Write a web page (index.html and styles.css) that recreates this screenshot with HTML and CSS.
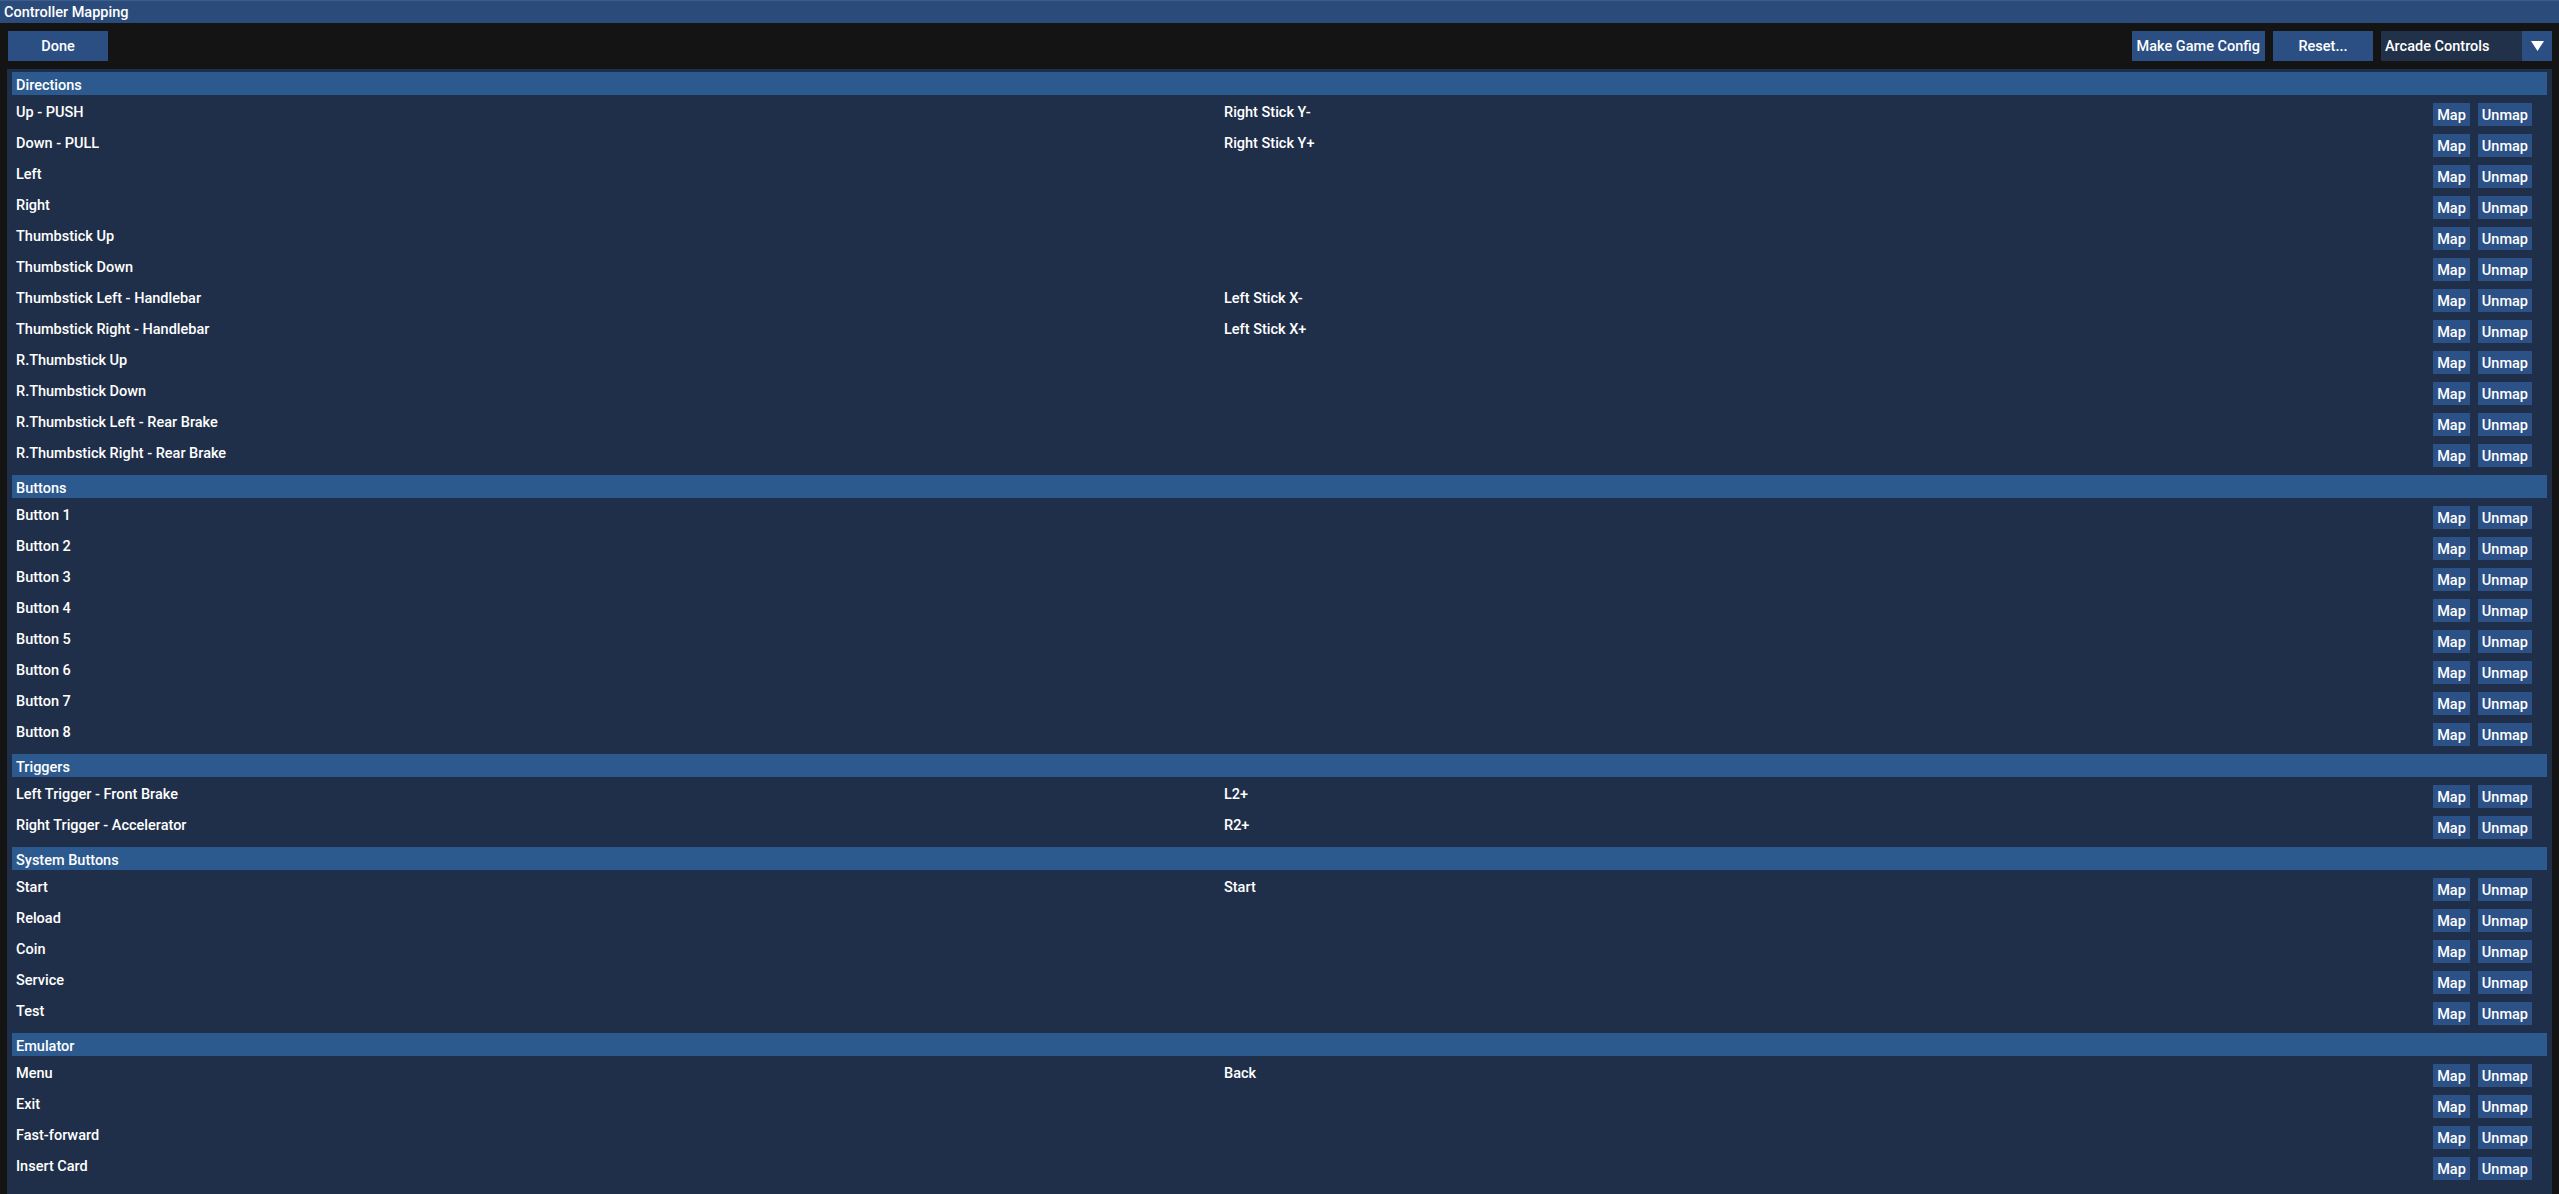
FILE: index.html
```html
<!DOCTYPE html>
<html>
<head>
<meta charset="utf-8">
<link rel="stylesheet" href="styles.css">
</head>
<body>
<div class="window">
  <div class="titlebar">Controller Mapping</div>
  <div class="toolbar">
    <button class="btn btn-fixed">Done</button>
    <div class="spacer"></div>
    <button class="btn btn-auto">Make Game Config</button>
    <button class="btn btn-fixed">Reset...</button>
    <div class="combo">
      <span class="combo-label">Arcade Controls</span>
      <span class="combo-arrow"><svg width="13" height="10" viewBox="0 0 13 10"><polygon points="0,0 13,0 6.5,10" fill="#ffffff"/></svg></span>
    </div>
  </div>
  <div class="panel">
    <div class="section">Directions</div>
    <div class="row"><span class="label">Up - PUSH</span><span class="bind">Right Stick Y-</span><span class="actions"><button class="sbtn">Map</button><button class="sbtn">Unmap</button></span></div>
    <div class="row"><span class="label">Down - PULL</span><span class="bind">Right Stick Y+</span><span class="actions"><button class="sbtn">Map</button><button class="sbtn">Unmap</button></span></div>
    <div class="row"><span class="label">Left</span><span class="bind"></span><span class="actions"><button class="sbtn">Map</button><button class="sbtn">Unmap</button></span></div>
    <div class="row"><span class="label">Right</span><span class="bind"></span><span class="actions"><button class="sbtn">Map</button><button class="sbtn">Unmap</button></span></div>
    <div class="row"><span class="label">Thumbstick Up</span><span class="bind"></span><span class="actions"><button class="sbtn">Map</button><button class="sbtn">Unmap</button></span></div>
    <div class="row"><span class="label">Thumbstick Down</span><span class="bind"></span><span class="actions"><button class="sbtn">Map</button><button class="sbtn">Unmap</button></span></div>
    <div class="row"><span class="label">Thumbstick Left - Handlebar</span><span class="bind">Left Stick X-</span><span class="actions"><button class="sbtn">Map</button><button class="sbtn">Unmap</button></span></div>
    <div class="row"><span class="label">Thumbstick Right - Handlebar</span><span class="bind">Left Stick X+</span><span class="actions"><button class="sbtn">Map</button><button class="sbtn">Unmap</button></span></div>
    <div class="row"><span class="label">R.Thumbstick Up</span><span class="bind"></span><span class="actions"><button class="sbtn">Map</button><button class="sbtn">Unmap</button></span></div>
    <div class="row"><span class="label">R.Thumbstick Down</span><span class="bind"></span><span class="actions"><button class="sbtn">Map</button><button class="sbtn">Unmap</button></span></div>
    <div class="row"><span class="label">R.Thumbstick Left - Rear Brake</span><span class="bind"></span><span class="actions"><button class="sbtn">Map</button><button class="sbtn">Unmap</button></span></div>
    <div class="row"><span class="label">R.Thumbstick Right - Rear Brake</span><span class="bind"></span><span class="actions"><button class="sbtn">Map</button><button class="sbtn">Unmap</button></span></div>

    <div class="section">Buttons</div>
    <div class="row"><span class="label">Button 1</span><span class="bind"></span><span class="actions"><button class="sbtn">Map</button><button class="sbtn">Unmap</button></span></div>
    <div class="row"><span class="label">Button 2</span><span class="bind"></span><span class="actions"><button class="sbtn">Map</button><button class="sbtn">Unmap</button></span></div>
    <div class="row"><span class="label">Button 3</span><span class="bind"></span><span class="actions"><button class="sbtn">Map</button><button class="sbtn">Unmap</button></span></div>
    <div class="row"><span class="label">Button 4</span><span class="bind"></span><span class="actions"><button class="sbtn">Map</button><button class="sbtn">Unmap</button></span></div>
    <div class="row"><span class="label">Button 5</span><span class="bind"></span><span class="actions"><button class="sbtn">Map</button><button class="sbtn">Unmap</button></span></div>
    <div class="row"><span class="label">Button 6</span><span class="bind"></span><span class="actions"><button class="sbtn">Map</button><button class="sbtn">Unmap</button></span></div>
    <div class="row"><span class="label">Button 7</span><span class="bind"></span><span class="actions"><button class="sbtn">Map</button><button class="sbtn">Unmap</button></span></div>
    <div class="row"><span class="label">Button 8</span><span class="bind"></span><span class="actions"><button class="sbtn">Map</button><button class="sbtn">Unmap</button></span></div>

    <div class="section">Triggers</div>
    <div class="row"><span class="label">Left Trigger - Front Brake</span><span class="bind">L2+</span><span class="actions"><button class="sbtn">Map</button><button class="sbtn">Unmap</button></span></div>
    <div class="row"><span class="label">Right Trigger - Accelerator</span><span class="bind">R2+</span><span class="actions"><button class="sbtn">Map</button><button class="sbtn">Unmap</button></span></div>

    <div class="section">System Buttons</div>
    <div class="row"><span class="label">Start</span><span class="bind">Start</span><span class="actions"><button class="sbtn">Map</button><button class="sbtn">Unmap</button></span></div>
    <div class="row"><span class="label">Reload</span><span class="bind"></span><span class="actions"><button class="sbtn">Map</button><button class="sbtn">Unmap</button></span></div>
    <div class="row"><span class="label">Coin</span><span class="bind"></span><span class="actions"><button class="sbtn">Map</button><button class="sbtn">Unmap</button></span></div>
    <div class="row"><span class="label">Service</span><span class="bind"></span><span class="actions"><button class="sbtn">Map</button><button class="sbtn">Unmap</button></span></div>
    <div class="row"><span class="label">Test</span><span class="bind"></span><span class="actions"><button class="sbtn">Map</button><button class="sbtn">Unmap</button></span></div>

    <div class="section">Emulator</div>
    <div class="row"><span class="label">Menu</span><span class="bind">Back</span><span class="actions"><button class="sbtn">Map</button><button class="sbtn">Unmap</button></span></div>
    <div class="row"><span class="label">Exit</span><span class="bind"></span><span class="actions"><button class="sbtn">Map</button><button class="sbtn">Unmap</button></span></div>
    <div class="row"><span class="label">Fast-forward</span><span class="bind"></span><span class="actions"><button class="sbtn">Map</button><button class="sbtn">Unmap</button></span></div>
    <div class="row"><span class="label">Insert Card</span><span class="bind"></span><span class="actions"><button class="sbtn">Map</button><button class="sbtn">Unmap</button></span></div>
  </div>
</div>
</body>
</html>
```

FILE: styles.css
```css
html, body {
  margin: 0;
  padding: 0;
  height: 100%;
  overflow: hidden;
  background: #141414;
}

body {
  font-family: Roboto, "Liberation Sans", sans-serif;
  font-size: 14.5px;
  font-weight: 500;
  color: #ffffff;
}

.window {
  height: 100%;
  display: flex;
  flex-direction: column;
  background: #141414;
}

.titlebar {
  height: 23px;
  box-sizing: border-box;
  padding: 1px 0 0 4px;
  line-height: 21px;
  background: #2b4b7b;
  border-top: 1px solid #3a5d8e;
  white-space: nowrap;
}

.toolbar {
  display: flex;
  align-items: flex-start;
  gap: 8px;
  padding: 8px 7px 8px 8px;
}

.spacer {
  flex: 1;
}

.btn {
  font: inherit;
  color: #ffffff;
  background: #2b4f82;
  border: none;
  margin: 0;
  height: 30px;
  box-sizing: border-box;
  line-height: 28px;
  padding: 2px 4px 0 4px;
  white-space: nowrap;
}

.btn-auto {
  padding: 2px 5px 0 5px;
}

.btn-fixed {
  width: 100px;
  text-align: center;
}

.combo {
  display: flex;
  width: 171px;
  height: 30px;
}

.combo-label {
  flex: 1;
  background: #213149;
  line-height: 28px;
  padding: 2px 0 0 4px;
  white-space: nowrap;
}

.combo-arrow {
  width: 30px;
  background: #2b4f82;
  display: flex;
  align-items: center;
  justify-content: center;
}

.combo-arrow svg {
  display: block;
  margin-left: 1px;
}

.panel {
  flex: 1;
  margin: 0 7px;
  padding: 3px 5px 0 5px;
  background: #1f2f4a;
  overflow: hidden;
}

.section {
  height: 23px;
  box-sizing: border-box;
  padding: 4px 4px 0 4px;
  line-height: 19px;
  background: #2c5a8e;
  margin-bottom: 8px;
  white-space: nowrap;
}

.row {
  display: grid;
  grid-template-columns: 1208px 1fr auto;
  height: 23px;
  padding: 0 15px 0 4px;
  margin-bottom: 8px;
  line-height: 20px;
  white-space: nowrap;
}

.actions {
  display: flex;
  gap: 8px;
}

.sbtn {
  font: inherit;
  color: #ffffff;
  background: #2b5186;
  border: none;
  margin: 0;
  height: 23px;
  box-sizing: border-box;
  padding: 3px 4px 0 4px;
  line-height: 20px;
  white-space: nowrap;
}
```
